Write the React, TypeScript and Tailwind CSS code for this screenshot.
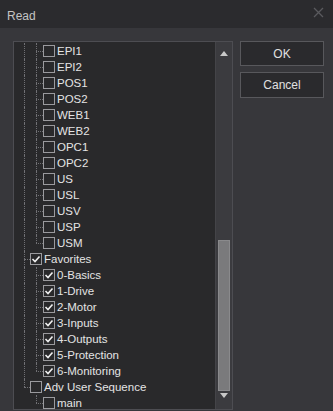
import React from "react";

type Row = {
  label: string;
  checked: boolean;
  level: 1 | 2;
  c0: "v" | "none" | "tee" | "last"; // column 0 guide
  c1?: "tee" | "last"; // column 1 guide (level 2 only)
};

const rows: Row[] = [
  ...["EPI1", "EPI2", "POS1", "POS2", "WEB1", "WEB2", "OPC1", "OPC2", "US", "USL", "USV", "USP", "USM"].map(
    (l, i, a): Row => ({ label: l, checked: false, level: 2, c0: "v", c1: i === a.length - 1 ? "last" : "tee" })
  ),
  { label: "Favorites", checked: true, level: 1, c0: "tee" },
  ...["0-Basics", "1-Drive", "2-Motor", "3-Inputs", "4-Outputs", "5-Protection", "6-Monitoring"].map(
    (l, i, a): Row => ({ label: l, checked: true, level: 2, c0: "v", c1: i === a.length - 1 ? "last" : "tee" })
  ),
  { label: "Adv User Sequence", checked: false, level: 1, c0: "last" },
  { label: "main", checked: false, level: 2, c0: "none", c1: "last" },
];

function Guide({ kind, w, x }: { kind: "v" | "none" | "tee" | "last"; w: string; x: string }) {
  return (
    <div className={`relative h-[16px] shrink-0 ${w}`}>
      {kind === "v" || kind === "tee" ? (
        <div className={`absolute top-0 bottom-0 ${x} border-l border-dotted border-[#707074]`} />
      ) : null}
      {kind === "last" ? (
        <div className={`absolute top-0 h-[8px] ${x} border-l border-dotted border-[#707074]`} />
      ) : null}
      {kind === "tee" || kind === "last" ? (
        <div className={`absolute top-[8px] right-0 ${x} border-t border-dotted border-[#707074]`} />
      ) : null}
    </div>
  );
}

function Check({ checked }: { checked: boolean }) {
  return (
    <div className="w-[12px] h-[12px] shrink-0 border border-[#9a9a9e] flex items-center justify-center">
      {checked ? (
        <svg width="10" height="10" viewBox="0 0 10 10">
          <polyline points="1.5,5 4,7.5 8.5,2.5" fill="none" stroke="#f0f0f0" strokeWidth="1.6" />
        </svg>
      ) : null}
    </div>
  );
}

export default function App() {
  return (
    <div
      className="w-[333px] h-[411px] bg-[#37373b] overflow-hidden flex flex-col select-none"
      style={{ fontFamily: '"Liberation Sans", Arial, sans-serif' }}
    >
      <div className="h-[28px] shrink-0 bg-[#2b2b2e] flex items-center justify-between pl-[7px] pr-[9px]">
        <span className="text-[12px] text-[#c4c4c4] pt-[4px]">Read</span>
        <svg width="11" height="11" viewBox="0 0 11 11" className="mb-[3px]">
          <path d="M1 1 L10 10 M10 1 L1 10" stroke="#5a5a5e" strokeWidth="1.3" />
        </svg>
      </div>
      <div className="flex pl-[13px] pt-[13px] gap-[7px]">
        <div className="w-[220px] h-[369px] border border-[#4d4d52] bg-[#29292b] flex">
          <div className="flex-1 pt-[1px] pl-[4px] overflow-hidden">
            {rows.map((r) => (
              <div key={r.label} className="flex items-center h-[16px]">
                <Guide kind={r.c0} w="w-[12px]" x="left-[6px]" />
                {r.level === 2 && r.c1 ? <Guide kind={r.c1} w="w-[13px]" x="left-[6px]" /> : null}
                <Check checked={r.checked} />
                <span className="ml-[2px] text-[11.5px] leading-[16px] text-[#e4e4e4] whitespace-nowrap">
                  {r.label}
                </span>
              </div>
            ))}
          </div>
          <div className="w-[17px] bg-[#3b3b3f] border-l border-[#444448] flex flex-col items-center">
            <div className="h-[14px] flex items-end justify-center">
              <svg width="8" height="5" viewBox="0 0 8 5">
                <polygon points="0,5 4,0 8,5" fill="#c8c8c8" />
              </svg>
            </div>
            <div className="flex-1 w-full px-[2px] pt-[184px] pb-[14px]">
              <div className="h-full bg-[#7a7a7c] border border-[#8a8a8c]" />
            </div>
            <div className="h-[14px] flex items-start justify-center -mt-[12px] mb-[2px]">
              <svg width="8" height="5" viewBox="0 0 8 5">
                <polygon points="0,0 8,0 4,5" fill="#c8c8c8" />
              </svg>
            </div>
          </div>
        </div>
        <div className="flex flex-col gap-[6px]">
          <button className="w-[84px] h-[25px] bg-[#2a2a2d] border border-[#58585c] text-[12px] text-[#e0e0e0]">
            OK
          </button>
          <button className="w-[84px] h-[26px] bg-[#2a2a2d] border border-[#58585c] text-[12px] text-[#e0e0e0]">
            Cancel
          </button>
        </div>
      </div>
    </div>
  );
}
